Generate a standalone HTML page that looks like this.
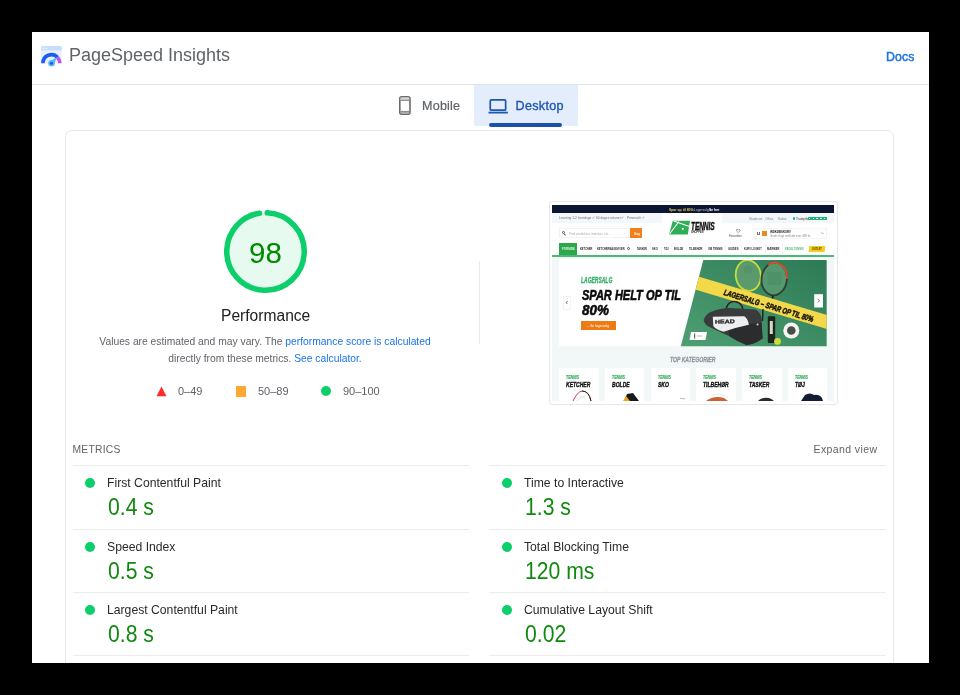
<!DOCTYPE html>
<html><head><meta charset="utf-8">
<style>
*{margin:0;padding:0;box-sizing:border-box}
html,body{width:960px;height:695px;overflow:hidden;background:#000}
body{font-family:"Liberation Sans",sans-serif;position:relative;-webkit-font-smoothing:antialiased}
.a{position:absolute;white-space:nowrap;line-height:1}
#page{position:absolute;left:32px;top:32px;width:897px;height:631px;background:#fff;overflow:hidden;will-change:transform}
#card{position:absolute;left:33.3px;top:97.6px;width:828.4px;height:700px;border:1px solid #e6e6e6;border-radius:7px}
.line{position:absolute;height:1px;background:#ececec}
.dot{position:absolute;width:10px;height:10px;border-radius:50%;background:#0cce6b}
.nav{position:absolute;top:43px;height:1.7px;background:#3b3b3b;opacity:.6}
.mname{font-size:12.2px;color:#2a2a2a}
.mval{font-size:23px;color:#0f8a0f;transform:scaleX(0.92);transform-origin:0 0}
</style></head>
<body>
<div id="page">
<div id="card"></div>
</div>
<div id="ov" style="position:absolute;left:0;top:0;width:960px;height:695px;will-change:transform">
  <!-- header -->
  <div class="a" style="left:32px;top:84px;width:897px;height:1px;background:#e3e3e3"></div>
  <svg class="a" style="left:0;top:0" width="80" height="80" viewBox="0 0 80 80">
    <rect x="41" y="46" width="20.8" height="17.5" rx="1.6" fill="#eaf2fe"/>
    <rect x="41" y="46" width="20.8" height="4.5" rx="1.6" fill="#c8ddfb"/>
    <circle cx="43.4" cy="48.4" r="0.8" fill="#f4f8ff"/><circle cx="46.5" cy="48.4" r="0.8" fill="#f4f8ff"/>
    <path d="M42.90 63.20 A8.5 8.5 0 0 1 57.62 57.40" stroke="#1a5cf5" stroke-width="3.6" fill="none"/>
    <path d="M57.62 57.40 A8.5 8.5 0 0 1 59.90 63.20" stroke="#c255ef" stroke-width="3.6" fill="none"/>
    <path d="M48.6 62.2 L56.8 57 L54.2 64.4 Z" fill="#56bdf7"/>
    <circle cx="51.5" cy="63.3" r="3.3" fill="#56bdf7"/>
    <circle cx="51.5" cy="63.3" r="1.6" fill="#1a5cf5"/>
  </svg>
  <div class="a" style="left:69px;top:46px;font-size:18px;color:#5f6368">PageSpeed Insights</div>
  <div class="a" style="left:886px;top:51px;font-size:12.3px;letter-spacing:0.15px;color:#1a73e8;-webkit-text-stroke:0.45px #1a73e8">Docs</div>

  <!-- tabs -->
  <div class="a" style="left:474px;top:85px;width:103.5px;height:40.8px;background:#e3edfc"></div>
  <div class="a" style="left:489.3px;top:123.4px;width:73.2px;height:3.3px;background:#1b51ad;border-radius:2px"></div>
  <svg class="a" style="left:0;top:0" width="960" height="140">
    <rect x="399.8" y="96.8" width="10.2" height="17.4" rx="1.9" fill="none" stroke="#6a6a6a" stroke-width="1.6"/>
    <rect x="400.6" y="97.6" width="8.6" height="2.3" fill="#d2d2d2"/>
    <rect x="400.6" y="99.8" width="8.6" height="0.9" fill="#6a6a6a"/>
    <rect x="400.6" y="110.9" width="8.6" height="0.9" fill="#6a6a6a"/>
    <rect x="400.6" y="111.8" width="8.6" height="1.9" fill="#a9a9a9"/>
    <rect x="490.25" y="99.95" width="15.4" height="10.2" rx="1" fill="none" stroke="#1f56b0" stroke-width="1.7"/>
    <rect x="488.5" y="111.7" width="19.4" height="1.8" fill="#1f56b0"/>
  </svg>
  <div class="a" style="left:422px;top:100px;font-size:12.6px;letter-spacing:0.2px;color:#5f6368;-webkit-text-stroke:0.2px #5f6368">Mobile</div>
  <div class="a" style="left:515.5px;top:100px;font-size:12.6px;letter-spacing:0.3px;color:#1f56b0;-webkit-text-stroke:0.35px #1f56b0">Desktop</div>

  <!-- gauge -->
  <svg class="a" style="left:224px;top:210px" width="83" height="83" viewBox="0 0 120 120">
    <circle cx="60" cy="60" r="56" fill="rgba(12,206,107,0.1)" stroke="#0cce6b" stroke-width="8" stroke-dasharray="340.1 400" stroke-linecap="round" transform="rotate(-87.4 60 60)"/>
  </svg>
  <div class="a" style="left:249px;top:238px;font-size:29.5px;color:#008800">98</div>
  <div class="a" style="left:221px;top:308px;font-size:15.6px;color:#212121">Performance</div>
  <div class="a" style="left:32px;top:333.3px;width:466px;text-align:center;font-size:10.3px;color:#5f6368;line-height:17px;white-space:normal">Values are estimated and may vary. The <span style="color:#1a73e8">performance score is calculated</span><br>directly from these metrics. <span style="color:#1a73e8">See calculator.</span></div>

  <!-- legend -->
  <svg class="a" style="left:0;top:0" width="400" height="400" viewBox="0 0 400 400"><path d="M161.5 386.6 L166.5 396.3 L156.5 396.3 Z" fill="#fa2d2d"/></svg>
  <div class="a" style="left:178px;top:386px;font-size:11px;color:#5f6368">0–49</div>
  <div class="a" style="left:235.6px;top:386.1px;width:10.4px;height:10.5px;background:#ffa733"></div>
  <div class="a" style="left:258px;top:386px;font-size:11px;color:#5f6368">50–89</div>
  <div class="a" style="left:321.3px;top:386.3px;width:10.2px;height:10.2px;border-radius:50%;background:#0cce6b"></div>
  <div class="a" style="left:343px;top:386px;font-size:11px;color:#5f6368">90–100</div>

  <div class="a" style="left:478.5px;top:261px;width:1px;height:83px;background:#ebebeb"></div>

  <!-- screenshot frame -->
  <div class="a" style="left:548.5px;top:200.5px;width:289px;height:204px;border:1px solid #e6e6e6;border-radius:3px;background:#fff"></div>
  <div class="a" id="shot" style="left:552px;top:205px;width:282px;height:196px;background:#f2f7f8;overflow:hidden;font-family:'Liberation Sans',sans-serif">
    <!-- top bar -->
    <div class="a" style="left:0;top:0;width:282px;height:8px;background:#0b1632"></div>
    <div class="a" style="left:117px;top:3.63px;font-size:3.6px;font-weight:bold;color:#e0cf5a;transform:scaleX(0.95);transform-origin:0 0;">Spar op til 80%</div>
    <div class="a" style="left:139.2px;top:3.63px;font-size:3.6px;color:#b9c0cc;transform:scaleX(0.95);transform-origin:0 0;">– Lagersalg –</div>
    <div class="a" style="left:156.5px;top:3.63px;font-size:3.6px;font-weight:bold;color:#ffffff;transform:scaleX(0.95);transform-origin:0 0;">Se her</div>
    <!-- 2nd row -->
    <div class="a" style="left:0;top:8px;width:282px;height:9.5px;background:#f3f7f9"></div>
    <div class="a" style="left:110px;top:8px;width:60px;height:9.5px;background:#fff"></div>
    <div class="a" style="left:6.9px;top:12.18px;font-size:3.5px;color:#6d7278;transform:scaleX(0.92);transform-origin:0 0;">Levering 1-2 hverdage ✓</div>
    <div class="a" style="left:43.8px;top:12.18px;font-size:3.5px;color:#6d7278;transform:scaleX(0.92);transform-origin:0 0;">60 dages returret ✓</div>
    <div class="a" style="left:75px;top:12.18px;font-size:3.5px;color:#6d7278;transform:scaleX(0.92);transform-origin:0 0;">Prismatch ✓</div>
    <div class="a" style="left:196.9px;top:12.68px;font-size:3.5px;color:#80858b;transform:scaleX(0.92);transform-origin:0 0;">Skadeset</div>
    <div class="a" style="left:213px;top:12.68px;font-size:3.5px;color:#80858b;transform:scaleX(0.92);transform-origin:0 0;">Office</div>
    <div class="a" style="left:226px;top:12.68px;font-size:3.5px;color:#80858b;transform:scaleX(0.92);transform-origin:0 0;">Kabat</div>
    <div class="a" style="left:240.8px;top:12.4px;width:2.2px;height:2.2px;border-radius:50%;background:#1fb57a"></div>
    <div class="a" style="left:243.7px;top:12.68px;font-size:3.5px;color:#333;transform:scaleX(0.92);transform-origin:0 0;">Trustpilot</div>
    <div class="a" style="left:256.2px;top:11.7px;width:18.8px;height:3.6px;background:#1fb57a"></div>
    <div class="a" style="left:256.9px;top:12.9px;width:1.4px;height:1.4px;background:#dff5ea"></div>
    <div class="a" style="left:260.65px;top:12.9px;width:1.4px;height:1.4px;background:#dff5ea"></div>
    <div class="a" style="left:264.4px;top:12.9px;width:1.4px;height:1.4px;background:#dff5ea"></div>
    <div class="a" style="left:268.15px;top:12.9px;width:1.4px;height:1.4px;background:#dff5ea"></div>
    <div class="a" style="left:271.9px;top:12.9px;width:1.4px;height:1.4px;background:#dff5ea"></div>
    <!-- header -->
    <div class="a" style="left:0;top:17.5px;width:282px;height:20.7px;background:#fff"></div>
    <div class="a" style="left:7.4px;top:23.1px;width:70px;height:10.4px;border:0.6px solid #f1f3f4;background:#fff"></div>
    <div class="a" style="left:9.8px;top:26.4px;width:2.8px;height:2.8px;border:0.8px solid #555;border-radius:50%"></div>
    <div class="a" style="left:12.2px;top:29.3px;width:1.6px;height:0.8px;background:#555;transform:rotate(45deg)"></div>
    <div class="a" style="left:16.75px;top:27.83px;font-size:3.4px;color:#a9aeb3;transform:scaleX(0.95);transform-origin:0 0;">Find produkter, mærker, etc.</div>
    <div class="a" style="left:78.2px;top:23.1px;width:12px;height:10.4px;background:#f07f1c"></div>
    <div class="a" style="left:81.9px;top:27.63px;font-size:3.4px;font-weight:bold;color:#fff3e6;transform:scaleX(0.95);transform-origin:0 0;">Søg</div>
    <svg class="a" style="left:116px;top:14.5px" width="24" height="16" viewBox="0 0 24 16">
      <path d="M4.8 0.8 L22 0.8 L19.8 14.4 L1 14.4 Z" fill="#2eae55"/>
      <path d="M5.5 1 L21.5 6.5 M1.5 14 L11 1.5" stroke="#fff" stroke-width="1.1"/>
      <circle cx="14.8" cy="8.8" r="1.1" fill="#fff"/>
    </svg>
    <div class="a" style="left:139.2px;top:16px;font-size:11px;font-weight:bold;font-style:italic;color:#111;-webkit-text-stroke:0.45px #111;transform:scaleX(0.6);transform-origin:0 0;letter-spacing:-0.2px">TENNIS</div>
    <div class="a" style="left:139.4px;top:26.44px;font-size:3.2px;font-weight:bold;color:#222;transform:scaleX(0.8);transform-origin:0 0;font-style:italic;">SHOPPEN</div>
    <svg class="a" style="left:184.3px;top:23.8px" width="4.4" height="4" viewBox="0 0 10 9"><path d="M5 8.2 L1.2 4.4 Q0 3 1 1.6 Q2.6 0 5 2.2 Q7.4 0 9 1.6 Q10 3 8.8 4.4 Z" fill="none" stroke="#555" stroke-width="1.3"/></svg>
    <div class="a" style="left:176.9px;top:29.84px;font-size:3.2px;color:#444;transform:scaleX(0.95);transform-origin:0 0;">Favoritter</div>
    <div class="a" style="left:201.5px;top:23px;width:73.5px;height:10.5px;border:0.6px solid #f3f4f5"></div>
    <div class="a" style="left:205px;top:26.5px;width:3.2px;height:3.4px;border:0.6px solid #777;border-top:none"></div>
    <div class="a" style="left:209.9px;top:25.7px;width:5.4px;height:5.3px;background:#f0871e"></div>
    <div class="a" style="left:217.7px;top:25.78px;font-size:3.3px;font-weight:bold;color:#222;transform:scaleX(0.85);transform-origin:0 0;">INDKØBSKURV</div>
    <div class="a" style="left:217.7px;top:29.94px;font-size:3.0px;color:#888;transform:scaleX(0.95);transform-origin:0 0;">Gratis fragt ved køb over 499 kr.</div>
    <svg class="a" style="left:268.8px;top:26.6px" width="3.6" height="2.4" viewBox="0 0 6 4"><path d="M0.5 0.5 L3 3 L5.5 0.5" fill="none" stroke="#666" stroke-width="0.8"/></svg>
    <!-- nav -->
    <div class="a" style="left:0;top:38.2px;width:282px;height:12px;background:#fff"></div>
    <div class="a" style="left:7.2px;top:38.2px;width:17.7px;height:11.6px;background:#2aa84a"></div>
    <div class="a" style="left:10px;top:42.98px;font-size:3.6px;font-weight:bold;color:#e6f5ea;transform:scaleX(0.8);transform-origin:0 0;">FORSIDE</div>
    <div class="a" style="left:27.7px;top:42.98px;font-size:3.6px;font-weight:bold;color:#2b2b2b;transform:scaleX(0.719);transform-origin:0 0;">KETCHER</div>
    <div class="a" style="left:42.8px;top:39px;width:0.5px;height:10px;background:#f6f6f6"></div>
    <div class="a" style="left:45.4px;top:42.98px;font-size:3.6px;font-weight:bold;color:#2b2b2b;transform:scaleX(0.715);transform-origin:0 0;">KETCHERBÅGEVIVER</div>
    <div class="a" style="left:75.6px;top:39px;width:0.5px;height:10px;background:#f6f6f6"></div>
    <div class="a" style="left:85px;top:42.98px;font-size:3.6px;font-weight:bold;color:#2b2b2b;transform:scaleX(0.681);transform-origin:0 0;">TASKER</div>
    <div class="a" style="left:97.5px;top:39px;width:0.5px;height:10px;background:#f6f6f6"></div>
    <div class="a" style="left:100.3px;top:42.98px;font-size:3.6px;font-weight:bold;color:#2b2b2b;transform:scaleX(0.73);transform-origin:0 0;">SKO</div>
    <div class="a" style="left:108.6px;top:39px;width:0.5px;height:10px;background:#f6f6f6"></div>
    <div class="a" style="left:111.75px;top:42.98px;font-size:3.6px;font-weight:bold;color:#2b2b2b;transform:scaleX(0.666);transform-origin:0 0;">TØJ</div>
    <div class="a" style="left:119.0px;top:39px;width:0.5px;height:10px;background:#f6f6f6"></div>
    <div class="a" style="left:121.6px;top:42.98px;font-size:3.6px;font-weight:bold;color:#2b2b2b;transform:scaleX(0.746);transform-origin:0 0;">BOLDE</div>
    <div class="a" style="left:133.6px;top:39px;width:0.5px;height:10px;background:#f6f6f6"></div>
    <div class="a" style="left:136.75px;top:42.98px;font-size:3.6px;font-weight:bold;color:#2b2b2b;transform:scaleX(0.737);transform-origin:0 0;">TILBEHØR</div>
    <div class="a" style="left:152.9px;top:39px;width:0.5px;height:10px;background:#f6f6f6"></div>
    <div class="a" style="left:156px;top:42.98px;font-size:3.6px;font-weight:bold;color:#2b2b2b;transform:scaleX(0.729);transform-origin:0 0;">OM TENNIS</div>
    <div class="a" style="left:173.2px;top:39px;width:0.5px;height:10px;background:#f6f6f6"></div>
    <div class="a" style="left:176.3px;top:42.98px;font-size:3.6px;font-weight:bold;color:#2b2b2b;transform:scaleX(0.758);transform-origin:0 0;">GUIDES</div>
    <div class="a" style="left:189.35px;top:39px;width:0.5px;height:10px;background:#f6f6f6"></div>
    <div class="a" style="left:192.2px;top:42.98px;font-size:3.6px;font-weight:bold;color:#2b2b2b;transform:scaleX(0.677);transform-origin:0 0;">KURV LOOKET</div>
    <div class="a" style="left:212.5px;top:39px;width:0.5px;height:10px;background:#f6f6f6"></div>
    <div class="a" style="left:215px;top:42.98px;font-size:3.6px;font-weight:bold;color:#2b2b2b;transform:scaleX(0.749);transform-origin:0 0;">MÆRKER</div>
    <div class="a" style="left:230.2px;top:39px;width:0.5px;height:10px;background:#f6f6f6"></div>
    <div class="a" style="left:75px;top:41.8px;width:3px;height:3px;border:0.6px solid #555;border-radius:50%"></div>
    <div class="a" style="left:232.8px;top:42.98px;font-size:3.6px;font-weight:bold;color:#56bf7d;transform:scaleX(0.752);transform-origin:0 0;">PADELTENNIS</div>
    <div class="a" style="left:256.75px;top:41.2px;width:15.6px;height:5.8px;background:#f6cf1d;transform:skewX(-8deg)"></div>
    <div class="a" style="left:259.9px;top:43.23px;font-size:3.6px;font-weight:bold;color:#4a3d05;transform:scaleX(0.687);transform-origin:0 0;">OUTLET</div>
    <div class="a" style="left:0;top:50.3px;width:282px;height:1.4px;background:#4cb873"></div>
    <!-- hero -->
    <div class="a" style="left:6.6px;top:53.9px;width:268px;height:87.5px;background:#fff"></div>
    <div class="a" style="left:10.5px;top:91.4px;width:8.5px;height:13.3px;background:#fff;border:1px solid #f3f3f3;font-size:8px;color:#555;line-height:11px;text-align:center">‹</div>
    <div class="a" style="left:29.2px;top:70.6px;font-size:8.6px;font-weight:bold;font-style:italic;color:#32ad66;-webkit-text-stroke:0.3px #32ad66;transform:scaleX(0.58);transform-origin:0 0">LAGERSALG</div>
    <div class="a" style="left:29.6px;top:81.6px;font-size:15px;font-weight:bold;font-style:italic;color:#0b0b0b;-webkit-text-stroke:0.6px #0b0b0b;transform:scaleX(0.735);transform-origin:0 0">SPAR HELT OP TIL</div>
    <div class="a" style="left:29.8px;top:97.2px;font-size:15px;font-weight:bold;font-style:italic;color:#0b0b0b;-webkit-text-stroke:0.6px #0b0b0b;transform:scaleX(0.9);transform-origin:0 0">80%</div>
    <div class="a" style="left:29px;top:116px;width:35px;height:8.7px;background:#ec7a15"></div>
    <div class="a" style="left:33.5px;top:119.6px;font-size:3.6px;font-weight:bold;color:#fde3c8;transform:scaleX(0.9);transform-origin:0 0">→ Se lagersalg</div>
    <svg class="a" style="left:0;top:0" width="282" height="196" viewBox="0 0 282 196">
      <defs>
        <linearGradient id="gg" x1="0" y1="1" x2="1" y2="0">
          <stop offset="0" stop-color="#4e9f72"/><stop offset="1" stop-color="#2d7a56"/>
        </linearGradient>
        <clipPath id="gc"><path d="M151.3 55 L274.7 55 L274.7 141.3 L128.8 141.3 Z"/></clipPath>
      </defs>
      <path d="M151.3 55 L274.7 55 L274.7 141.3 L128.8 141.3 Z" fill="url(#gg)"/>
      <g clip-path="url(#gc)">
        <ellipse cx="196.25" cy="70.5" rx="12.5" ry="15.4" fill="#5b9a6c" stroke="#c6dc3a" stroke-width="1.8" transform="rotate(-7 196.25 70.5)"/>
        <path d="M191 63 Q196 57 201 63 L199 69 Q196 66 193 69 Z" fill="#4f8a60" opacity=".5"/>
        
        <ellipse cx="222.2" cy="74" rx="12.7" ry="16.4" fill="#559870" stroke="#2f3f33" stroke-width="1.8" transform="rotate(6 222.2 74)"/>
        <path d="M215 67 L230 67 L229 80 L216 80 Z" fill="#4a8763" opacity=".45"/>
        <path d="M216.36 59.88 A12.7 16.4 6 0 1 234.93 73.90" stroke="#d8502a" stroke-width="1.9" fill="none"/>
        <path d="M221 90.5 L220 96" stroke="#222" stroke-width="1.8"/>
        <path d="M120 63.5 L290 114.5 L290 128.5 L120 77.5 Z" fill="#f3d84a"/>
        <text x="0" y="0" transform="translate(171.2 89.8) rotate(17) scale(0.74 1)" font-family="Liberation Sans" font-weight="bold" font-style="italic" font-size="8" fill="#15150c" stroke="#15150c" stroke-width="0.5">LAGERSALG – SPAR OP TIL 80%</text>
        <path d="M174 104 Q176 96.5 182 96.5 Q189 96.5 191 104" stroke="#262626" stroke-width="1.6" fill="none"/>
        <path d="M151.6 115 Q154 108 160.2 106.5 Q168 103 177.4 103 L203.7 104.5 Q208 107 209.5 112.9 L210.6 133.5 Q203 139 194.6 140 Q186 137 177.4 131.3 L160.2 123.2 Q152 120 151.6 115 Z" fill="#3a3b3d"/>
        <path d="M176 120 L209.5 118 L210.6 133.5 Q203 139 194.6 140 Q186 137 177.4 131.3 Z" fill="#2b2c2e"/>
        <path d="M160.8 111.8 L192.3 111.3 Q196 114 196.9 119.8 Q184 122.5 171.6 126.7 Q163 124 161.3 120.9 Z" fill="#eceeef"/>
        <text x="0" y="0" transform="translate(163 118.8) rotate(-2) scale(1.3 1)" font-family="Liberation Sans" font-weight="bold" font-size="5.4" fill="#222" stroke="#222" stroke-width="0.25">HEAD</text>
        <circle cx="205.5" cy="119.5" r="1" fill="#ddd"/>
        <path d="M211 104 L210.5 116" stroke="#222" stroke-width="1.4"/>
        <rect x="215.8" y="111.2" width="7.4" height="26.9" rx="1" fill="#1c261c"/>
        <rect x="217.8" y="116" width="3" height="13" fill="#d5dacd"/>
        <circle cx="225.5" cy="136.4" r="3.4" fill="#cbdc3c"/>
        <circle cx="239.3" cy="125.5" r="8" fill="#f4f4f2"/>
        <circle cx="239.3" cy="125.5" r="4.3" fill="#4a4d47"/>
      </g>
      <rect x="262.2" y="89.2" width="8.8" height="13.3" fill="#fff"/>
      <path d="M265.8 94 L267.5 95.8 L265.8 97.6" stroke="#555" stroke-width="0.8" fill="none"/>
      <path d="M139 127 L155 127 L153.5 135 L137.5 135 Z" fill="#fff"/>
      <rect x="142" y="128.5" width="1.2" height="5" fill="#666"/>
      <rect x="145" y="130.5" width="5" height="1" fill="#bbb"/>
    </svg>
    <div class="a" style="left:7.4px;top:163.4px;width:39.3px;height:40px;background:#fff"></div>
    <div class="a" style="left:14.4px;top:170.2px;font-size:5px;font-weight:bold;font-style:italic;color:#3bb060;-webkit-text-stroke:0.2px #3bb060;transform:scaleX(0.7);transform-origin:0 0">TENNIS</div>
    <div class="a" style="left:14.4px;top:175.7px;font-size:8px;font-weight:bold;font-style:italic;color:#111;-webkit-text-stroke:0.4px #111;transform:scaleX(0.63);transform-origin:0 0">KETCHER</div>
    <div class="a" style="left:53px;top:163.4px;width:39.3px;height:40px;background:#fff"></div>
    <div class="a" style="left:60px;top:170.2px;font-size:5px;font-weight:bold;font-style:italic;color:#3bb060;-webkit-text-stroke:0.2px #3bb060;transform:scaleX(0.7);transform-origin:0 0">TENNIS</div>
    <div class="a" style="left:60px;top:175.7px;font-size:8px;font-weight:bold;font-style:italic;color:#111;-webkit-text-stroke:0.4px #111;transform:scaleX(0.63);transform-origin:0 0">BOLDE</div>
    <div class="a" style="left:98.8px;top:163.4px;width:39.3px;height:40px;background:#fff"></div>
    <div class="a" style="left:105.8px;top:170.2px;font-size:5px;font-weight:bold;font-style:italic;color:#3bb060;-webkit-text-stroke:0.2px #3bb060;transform:scaleX(0.7);transform-origin:0 0">TENNIS</div>
    <div class="a" style="left:105.8px;top:175.7px;font-size:8px;font-weight:bold;font-style:italic;color:#111;-webkit-text-stroke:0.4px #111;transform:scaleX(0.63);transform-origin:0 0">SKO</div>
    <div class="a" style="left:144.25px;top:163.4px;width:39.3px;height:40px;background:#fff"></div>
    <div class="a" style="left:151.25px;top:170.2px;font-size:5px;font-weight:bold;font-style:italic;color:#3bb060;-webkit-text-stroke:0.2px #3bb060;transform:scaleX(0.7);transform-origin:0 0">TENNIS</div>
    <div class="a" style="left:151.25px;top:175.7px;font-size:8px;font-weight:bold;font-style:italic;color:#111;-webkit-text-stroke:0.4px #111;transform:scaleX(0.63);transform-origin:0 0">TILBEHØR</div>
    <div class="a" style="left:190.3px;top:163.4px;width:39.3px;height:40px;background:#fff"></div>
    <div class="a" style="left:197.3px;top:170.2px;font-size:5px;font-weight:bold;font-style:italic;color:#3bb060;-webkit-text-stroke:0.2px #3bb060;transform:scaleX(0.7);transform-origin:0 0">TENNIS</div>
    <div class="a" style="left:197.3px;top:175.7px;font-size:8px;font-weight:bold;font-style:italic;color:#111;-webkit-text-stroke:0.4px #111;transform:scaleX(0.63);transform-origin:0 0">TASKER</div>
    <div class="a" style="left:235.7px;top:163.4px;width:39.3px;height:40px;background:#fff"></div>
    <div class="a" style="left:242.7px;top:170.2px;font-size:5px;font-weight:bold;font-style:italic;color:#3bb060;-webkit-text-stroke:0.2px #3bb060;transform:scaleX(0.7);transform-origin:0 0">TENNIS</div>
    <div class="a" style="left:242.7px;top:175.7px;font-size:8px;font-weight:bold;font-style:italic;color:#111;-webkit-text-stroke:0.4px #111;transform:scaleX(0.63);transform-origin:0 0">TØJ</div>
    <svg class="a" style="left:0;top:0" width="282" height="196" viewBox="0 0 282 196">
      <path d="M21 196 Q25 187 30 186 Q37 186 39 196" stroke="#d4404e" stroke-width="1" fill="none"/>
      <path d="M30 186 Q37 186 39 196" stroke="#222" stroke-width="1" fill="none"/>
      <path d="M25 196 Q29 190 33 192" stroke="#e8e8e8" stroke-width="1.5" fill="none"/>
      <path d="M72 196 L75 189 L81 188 L87 196 Z" fill="#1a1a1a"/>
      <path d="M71 196 L74 191 L78 196 Z" fill="#f0a61c"/>
      <path d="M128 193 L133 194" stroke="#bbb" stroke-width="1.2"/>
      <path d="M154 196 Q162 190 172 193 L176 196 Z" fill="#c9622e"/>
      <path d="M160 191 Q168 187 176 192" stroke="#eee" stroke-width="1.2" fill="none"/>
      <path d="M206 196 Q210 192 217 193 Q220 194 222 196 Z" fill="#2b2b2b"/>
      <path d="M249 196 L253 190 Q258 187 262 190 Q267 189 270 193 L271 196 Z" fill="#161c33"/>
    </svg>
    <div class="a" style="left:118.3px;top:150.6px;font-size:8px;font-weight:bold;font-style:italic;color:#8f959b;-webkit-text-stroke:0.3px #8f959b;transform:scaleX(0.64);transform-origin:0 0">TOP KATEGORIER</div>
  </div>

  <!-- metrics -->
  <div class="a" style="left:72.5px;top:444.5px;font-size:10.3px;color:#5f6368;letter-spacing:0.25px">METRICS</div>
  <div class="a" style="left:813.5px;top:444px;font-size:10.5px;color:#5f6368;letter-spacing:0.4px">Expand view</div>

  <div class="line" style="left:73px;top:465px;width:396px"></div>
  <div class="line" style="left:489px;top:465px;width:397px"></div>
  <div class="line" style="left:73px;top:529px;width:396px"></div>
  <div class="line" style="left:489px;top:529px;width:397px"></div>
  <div class="line" style="left:73px;top:592px;width:396px"></div>
  <div class="line" style="left:489px;top:592px;width:397px"></div>
  <div class="line" style="left:73px;top:655px;width:396px"></div>
  <div class="line" style="left:489px;top:655px;width:397px"></div>

  <div class="dot" style="left:85px;top:478px"></div>
  <div class="a mname" style="left:107px;top:477px">First Contentful Paint</div>
  <div class="a mval" style="left:107.5px;top:496px">0.4 s</div>
  <div class="dot" style="left:85px;top:542px"></div>
  <div class="a mname" style="left:107px;top:541px">Speed Index</div>
  <div class="a mval" style="left:107.5px;top:560px">0.5 s</div>
  <div class="dot" style="left:85px;top:605px"></div>
  <div class="a mname" style="left:107px;top:604px">Largest Contentful Paint</div>
  <div class="a mval" style="left:107.5px;top:623px">0.8 s</div>

  <div class="dot" style="left:502px;top:478px"></div>
  <div class="a mname" style="left:524px;top:477px">Time to Interactive</div>
  <div class="a mval" style="left:524.5px;top:496px">1.3 s</div>
  <div class="dot" style="left:502px;top:542px"></div>
  <div class="a mname" style="left:524px;top:541px">Total Blocking Time</div>
  <div class="a mval" style="left:524.5px;top:560px">120 ms</div>
  <div class="dot" style="left:502px;top:605px"></div>
  <div class="a mname" style="left:524px;top:604px">Cumulative Layout Shift</div>
  <div class="a mval" style="left:524.5px;top:623px">0.02</div>
</div>
<div style="position:absolute;left:0;top:663px;width:960px;height:32px;background:#000"></div>
</body></html>
